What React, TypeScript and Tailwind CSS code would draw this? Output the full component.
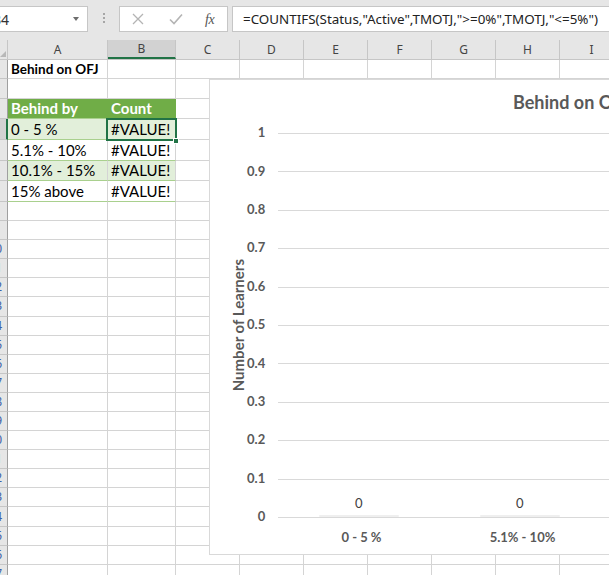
import React from 'react';

const COLS = [
  { key: 'A', w: 'w-[100px]' },
  { key: 'B', w: 'w-[68px]' },
  { key: 'C', w: 'w-[64px]' },
  { key: 'D', w: 'w-[64px]' },
  { key: 'E', w: 'w-[64px]' },
  { key: 'F', w: 'w-[64px]' },
  { key: 'G', w: 'w-[64px]' },
  { key: 'H', w: 'w-[64px]' },
  { key: 'I', w: 'w-[64px]' },
];

const TOP_ROWS = ['h-[19.3px]', 'h-[19.7px]', 'h-[20.3px]', 'h-[20.7px]', 'h-[20.7px]', 'h-[20.3px]', 'h-[21px]'];

const TABLE = [
  ['0 - 5 %', '#VALUE!'],
  ['5.1% - 10%', '#VALUE!'],
  ['10.1% - 15%', '#VALUE!'],
  ['15% above', '#VALUE!'],
];

const FORMULA = '=COUNTIFS(Status,"Active",TMOTJ,">=0%",TMOTJ,"<=5%")';

const TICKS = ['1', '0.9', '0.8', '0.7', '0.6', '0.5', '0.4', '0.3', '0.2', '0.1', '0'];
const CATEGORIES = ['0 - 5 %', '5.1% - 10%', '10.1% - 15%'];

function FormulaBar() {
  return (
    <div className="h-[40px] bg-[#e6e6e6] flex items-start font-['Noto_Sans',sans-serif]">
      <div className="mt-[6px] h-[26px] w-[88px] bg-white border border-[#c6c6c6] border-l-0 flex items-center overflow-hidden">
        <span className="ml-[-8px] text-[14px] text-[#333]">B4</span>
        <span className="ml-auto mr-[8px] w-0 h-0 border-l-[3px] border-r-[3px] border-t-[4px] border-l-transparent border-r-transparent border-t-[#6d6d6d]" />
      </div>
      <div className="ml-[15px] mt-[13px] flex flex-col gap-[2px]">
        <span className="w-[2px] h-[2px] bg-[#a6a6a6]" />
        <span className="w-[2px] h-[2px] bg-[#a6a6a6]" />
        <span className="w-[2px] h-[2px] bg-[#a6a6a6]" />
      </div>
      <div className="ml-[14px] mt-[6px] h-[26px] w-[109px] bg-white border border-[#c6c6c6] flex items-center">
        <svg width="12" height="12" viewBox="0 0 12 12" className="ml-[12px]">
          <path d="M1 1 L11 11 M11 1 L1 11" stroke="#b4b4b4" strokeWidth="1.3" fill="none" />
        </svg>
        <svg width="14" height="12" viewBox="0 0 14 12" className="ml-[25px]">
          <path d="M1 6.5 L5 10.5 L13 1.5" stroke="#b4b4b4" strokeWidth="1.6" fill="none" />
        </svg>
        <span className="ml-[22px] italic text-[14px] text-[#555] font-['Liberation_Serif',serif] tracking-[-0.5px]">fx</span>
      </div>
      <div className="ml-[4px] mt-[6px] h-[26px] flex-1 bg-white border border-[#c6c6c6] border-r-0 flex items-center pl-[10px] whitespace-nowrap overflow-hidden">
        <span className="text-[13.4px] text-[#222]">{FORMULA}</span>
      </div>
    </div>
  );
}

function HeaderRow() {
  return (
    <div className="h-[20px] flex bg-[#e6e6e6] border-b border-[#c6c6c6] font-['Noto_Sans',sans-serif] text-[12px] text-[#444]">
      <div className="w-[8px] shrink-0 border-r border-[#c6c6c6] flex items-end justify-end pb-[2px] pr-[1px]">
        <span className="w-0 h-0 border-t-[6px] border-r-[6px] border-t-transparent border-r-[#b8b8b8]" />
      </div>
      {COLS.map((c) => (
        <div
          key={c.key}
          className={
            c.key === 'B'
              ? `${c.w} shrink-0 border-r border-[#c6c6c6] bg-[#d2d2d2] border-b-2 border-b-[#217346] flex items-center justify-center`
              : `${c.w} shrink-0 border-r border-[#c6c6c6] flex items-center justify-center`
          }
        >
          {c.key}
        </div>
      ))}
    </div>
  );
}

function RowHeader({ n }: { n: number }) {
  const selected = n === 4;
  return (
    <div
      className={
        selected
          ? 'w-[8px] shrink-0 bg-[#d2d2d2] border-r-2 border-r-[#217346] border-b border-b-[#c6c6c6] flex items-center justify-end overflow-hidden'
          : 'w-[8px] shrink-0 bg-[#e6e6e6] border-r border-r-[#9f9f9f] border-b border-b-[#c6c6c6] flex items-center justify-end overflow-hidden'
      }
    >
      <span
        className={
          n < 10
            ? "shrink-0 mr-[9px] text-[12px] text-[#444] font-['Noto_Sans',sans-serif]"
            : "shrink-0 mr-[5px] text-[12px] text-[#3b5fa8] font-['Noto_Sans',sans-serif]"
        }
      >
        {n}
      </span>
    </div>
  );
}

function cellContent(row: number, col: string) {
  if (row === 1 && col === 'A') return { text: 'Behind on OFJ', cls: 'font-bold text-[13.5px] text-black' };
  if (row === 3 && (col === 'A' || col === 'B'))
    return { text: col === 'A' ? 'Behind by' : 'Count', cls: 'font-bold text-[15px] text-white' };
  if (row >= 4 && row <= 7 && (col === 'A' || col === 'B')) {
    const r = TABLE[row - 4];
    return { text: col === 'A' ? r[0] : r[1], cls: 'text-[15px] text-black' };
  }
  return null;
}

function cellClass(row: number, col: string, w: string) {
  const inTable = row >= 3 && row <= 7 && (col === 'A' || col === 'B');
  if (!inTable) return `${w} shrink-0 border-r border-b border-[#d4d4d4] flex items-center px-[3px] whitespace-nowrap overflow-visible`;
  if (row === 3)
    return `${w} shrink-0 bg-[#70ad47] border-r border-r-[#70ad47] border-b border-b-[#a9d08e] flex items-center px-[3px] whitespace-nowrap`;
  if (row === 4 || row === 6)
    return `${w} shrink-0 bg-[#e2efda] border-r border-r-[#d4d4d4] border-b border-b-[#a9d08e] flex items-center px-[3px] whitespace-nowrap`;
  return `${w} shrink-0 bg-white border-r border-r-[#d4d4d4] border-b border-b-[#a9d08e] flex items-center px-[3px] whitespace-nowrap`;
}

function Grid() {
  const rows = Array.from({ length: 27 }, (_, i) => i + 1);
  return (
    <div className="font-['Lato',sans-serif]">
      {rows.map((n) => (
        <div key={n} className={`flex ${TOP_ROWS[n - 1] ?? 'h-[19.1px]'}`}>
          <RowHeader n={n} />
          {COLS.map((c) => {
            const content = cellContent(n, c.key);
            return (
              <div key={c.key} className={cellClass(n, c.key, c.w)}>
                {content && <span className={content.cls}>{content.text}</span>}
              </div>
            );
          })}
        </div>
      ))}
    </div>
  );
}

function Chart() {
  return (
    <div className="absolute left-[209px] top-[79px] w-[420px] h-[476px] border border-[#d9d9d9] bg-white font-['Lato',sans-serif] text-[#595959] overflow-hidden">
      <div className="h-[53px] pt-[11px] pl-[303px] text-[18px] leading-[22px] font-bold whitespace-nowrap">Behind on OFJ</div>
      <div className="flex items-start h-[385px]">
        <div className="ml-[19px] w-[18px] h-[385px] flex items-center justify-center">
          <span className="[writing-mode:vertical-rl] rotate-180 text-[15px] font-bold whitespace-nowrap">Number of Learners</span>
        </div>
        <div className="w-[21px] -mt-[19.2px] flex flex-col">
          {TICKS.map((t) => (
            <div key={t} className="h-[38.4px] flex items-center justify-end text-[13px] font-bold">
              {t}
            </div>
          ))}
        </div>
        <div className="ml-[13px] flex-1 flex flex-col">
          {TICKS.slice(0, 9).map((t) => (
            <div key={t} className="h-[38.4px] border-t border-[#d9d9d9]" />
          ))}
          <div className="h-[38.4px] border-t border-[#d9d9d9] flex">
            {CATEGORIES.map((c) => (
              <div key={c} className="w-[161px] shrink-0 flex flex-col items-center justify-end">
                <span className="text-[13px] leading-[16px] text-[#404040]">0</span>
                <span className="mt-[4px] w-[80px] h-[2px] rounded-full bg-[#efefef]" />
              </div>
            ))}
          </div>
          <div className="border-t border-[#d9d9d9]" />
        </div>
      </div>
      <div className="flex pl-[71px] mt-[11px]">
        {CATEGORIES.map((c) => (
          <div key={c} className="w-[161px] shrink-0 text-center text-[13px] leading-[16px] font-bold whitespace-nowrap">
            {c}
          </div>
        ))}
      </div>
    </div>
  );
}

export default function App() {
  return (
    <div className="relative w-[609px] h-[575px] overflow-hidden bg-white">
      <FormulaBar />
      <HeaderRow />
      <Grid />
      <Chart />
      {/* active cell B4 */}
      <div className="absolute left-[106px] top-[118px] w-[71px] h-[23px] border-2 border-[#217346]" />
      <div className="absolute left-[173px] top-[138px] w-[6px] h-[6px] bg-[#217346] border border-white" />
    </div>
  );
}
